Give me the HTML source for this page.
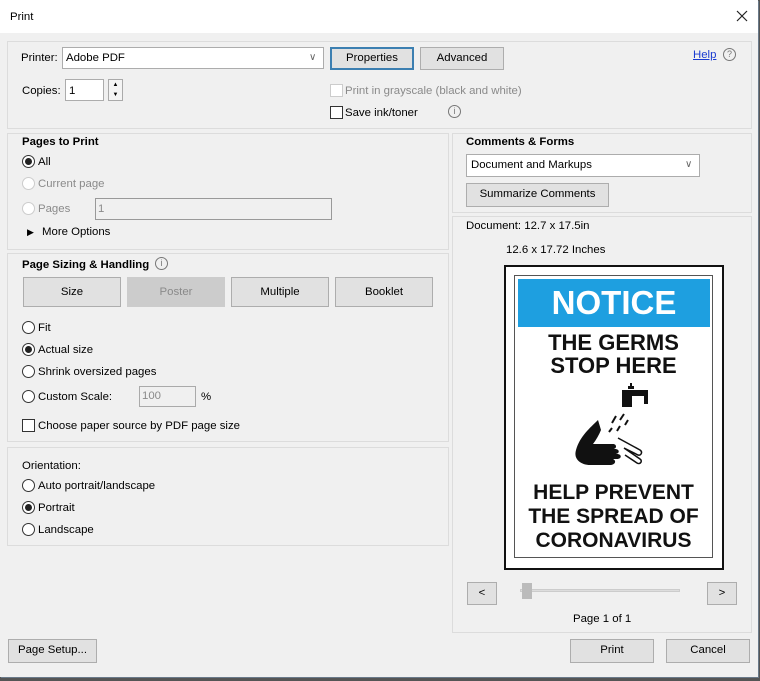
<!DOCTYPE html>
<html><head><style>
*{box-sizing:border-box;margin:0;padding:0}
body{width:760px;height:681px;background:#555;position:relative;overflow:hidden;font-family:"Liberation Sans",sans-serif;font-size:11.4px;color:#000}
.a{position:absolute}
.dlg{left:0;top:0;width:758px;height:677px;background:#f0f0f0;box-shadow:1px 1px 0 #6a7a8a, -1px 0 0 #2a6aa0}
.panel{position:absolute;border:1px solid #dcdcdc;background:#f0f0f0}
.t{position:absolute;white-space:nowrap;line-height:14px}
.btn{position:absolute;background:#e1e1e1;border:1px solid #adadad;text-align:center;line-height:21px}
.in{position:absolute;background:#fff;border:1px solid #7a7a7a}
.rad{position:absolute;width:13px;height:13px;border:1px solid #333;border-radius:50%;background:#fff}
.rad.on::after{content:"";position:absolute;left:2px;top:2px;width:7px;height:7px;border-radius:50%;background:#222}
.rad.dis{border-color:#ccc}
.cb{position:absolute;width:13px;height:13px;border:1px solid #333;background:#fff}
.g{color:#8a8a8a}
.b{font-weight:bold}
.info{position:absolute;width:13px;height:13px;border:1px solid #777;border-radius:50%;font-size:9px;line-height:11px;text-align:center;color:#777}
</style></head><body>
<div class="a dlg">
<div class="a" style="left:0;top:0;width:758px;height:33px;background:#fff"></div>
<div class="t" style="left:10px;top:10px">Print</div>
<svg class="a" style="left:736px;top:10px" width="12" height="12"><path d="M1 1L11 11M11 1L1 11" stroke="#222" stroke-width="1.2"/></svg>

<div class="panel" style="left:7px;top:41px;width:745px;height:88px"></div>
<div class="t" style="left:21px;top:51px">Printer:</div>
<div class="in" style="left:62px;top:47px;width:262px;height:22px;border-color:#acacac"></div>
<div class="t" style="left:66px;top:51px">Adobe PDF</div>
<div class="t" style="left:309px;top:51px;color:#666;font-size:10px">∨</div>
<div class="btn" style="left:330px;top:47px;width:84px;height:23px;border:2px solid #3c7fb1;line-height:19px">Properties</div>
<div class="btn" style="left:420px;top:47px;width:84px;height:23px">Advanced</div>
<div class="t" style="left:693px;top:48px;color:#1a3bd0;text-decoration:underline">Help</div>
<div class="info" style="left:723px;top:48px">?</div>
<div class="t" style="left:22px;top:84px">Copies:</div>
<div class="in" style="left:65px;top:79px;width:39px;height:22px;border-color:#acacac"></div>
<div class="t" style="left:69px;top:84px">1</div>
<div class="a" style="left:108px;top:79px;width:15px;height:22px;border:1px solid #aaa;background:#f4f4f4;font-size:6px;text-align:center;line-height:10px">▲<br>▼</div>
<div class="cb" style="left:330px;top:84px;border-color:#ccc"></div>
<div class="t g" style="left:345px;top:84px">Print in grayscale (black and white)</div>
<div class="cb" style="left:330px;top:106px"></div>
<div class="t" style="left:345px;top:106px">Save ink/toner</div>
<div class="info" style="left:448px;top:105px">i</div>

<div class="panel" style="left:7px;top:133px;width:442px;height:117px"></div>
<div class="t b" style="left:22px;top:135px">Pages to Print</div>
<div class="rad on" style="left:22px;top:155px"></div><div class="t" style="left:38px;top:155px">All</div>
<div class="rad dis" style="left:22px;top:177px"></div><div class="t g" style="left:38px;top:177px">Current page</div>
<div class="rad dis" style="left:22px;top:202px"></div><div class="t g" style="left:38px;top:202px">Pages</div>
<div class="in" style="left:95px;top:198px;width:237px;height:22px;background:#f0f0f0;border-color:#999"></div>
<div class="t g" style="left:98px;top:202px">1</div>
<div class="t" style="left:27px;top:225px;font-size:9px">▶</div><div class="t" style="left:42px;top:225px">More Options</div>

<div class="panel" style="left:7px;top:253px;width:442px;height:189px"></div>
<div class="t b" style="left:22px;top:258px">Page Sizing &amp; Handling</div>
<div class="info" style="left:155px;top:257px">i</div>
<div class="btn" style="left:23px;top:277px;width:98px;height:30px;line-height:28px">Size</div>
<div class="btn g" style="left:127px;top:277px;width:98px;height:30px;line-height:28px;background:#ccc;border-color:#ccc">Poster</div>
<div class="btn" style="left:231px;top:277px;width:98px;height:30px;line-height:28px">Multiple</div>
<div class="btn" style="left:335px;top:277px;width:98px;height:30px;line-height:28px">Booklet</div>
<div class="rad" style="left:22px;top:321px"></div><div class="t" style="left:38px;top:321px">Fit</div>
<div class="rad on" style="left:22px;top:343px"></div><div class="t" style="left:38px;top:343px">Actual size</div>
<div class="rad" style="left:22px;top:365px"></div><div class="t" style="left:38px;top:365px">Shrink oversized pages</div>
<div class="rad" style="left:22px;top:390px"></div><div class="t" style="left:38px;top:390px">Custom Scale:</div>
<div class="in" style="left:139px;top:386px;width:57px;height:21px;background:#f0f0f0;border-color:#aaa"></div>
<div class="t g" style="left:142px;top:389px">100</div>
<div class="t" style="left:201px;top:390px">%</div>
<div class="cb" style="left:22px;top:419px"></div><div class="t" style="left:38px;top:419px">Choose paper source by PDF page size</div>

<div class="panel" style="left:7px;top:447px;width:442px;height:99px"></div>
<div class="t" style="left:22px;top:459px">Orientation:</div>
<div class="rad" style="left:22px;top:479px"></div><div class="t" style="left:38px;top:479px">Auto portrait/landscape</div>
<div class="rad on" style="left:22px;top:501px"></div><div class="t" style="left:38px;top:501px">Portrait</div>
<div class="rad" style="left:22px;top:523px"></div><div class="t" style="left:38px;top:523px">Landscape</div>

<div class="panel" style="left:452px;top:133px;width:300px;height:80px"></div>
<div class="t b" style="left:466px;top:135px">Comments &amp; Forms</div>
<div class="in" style="left:466px;top:154px;width:234px;height:23px;border-color:#acacac"></div>
<div class="t" style="left:471px;top:158px">Document and Markups</div>
<div class="t" style="left:685px;top:158px;color:#666;font-size:10px">∨</div>
<div class="btn" style="left:466px;top:183px;width:143px;height:24px">Summarize Comments</div>

<div class="panel" style="left:452px;top:216px;width:300px;height:417px"></div>
<div class="t" style="left:466px;top:219px">Document: 12.7 x 17.5in</div>
<div class="t" style="left:506px;top:243px">12.6 x 17.72 Inches</div>
<div class="a" style="left:504px;top:265px;width:220px;height:305px;background:#fff;border:2px solid #111"></div>
<div class="a" style="left:514px;top:275px;width:199px;height:283px;border:1px solid #555"></div>
<div class="a" style="left:518px;top:279px;width:192px;height:48px;background:#1e9fe0"></div>
<div class="t" style="left:518px;top:286px;width:192px;text-align:center;color:#fff;font-weight:bold;font-size:33px;line-height:34px">NOTICE</div>
<div class="t" style="left:514px;top:331px;width:199px;text-align:center;font-weight:bold;font-size:22px;line-height:23px;color:#111">THE GERMS<br>STOP HERE</div>
<svg class="a" style="left:570px;top:380px" width="90" height="95" viewBox="0 0 90 95">
<rect x="58" y="6" width="6" height="3" fill="#111"/><rect x="60" y="3" width="2" height="6" fill="#111"/>
<path d="M52 10h26v14h-4v-8H62v8h-10z" fill="#111"/><rect x="52" y="22" width="10" height="5" fill="#111"/>
<path d="M54 34l-4 6M46 36l-4 7M58 40l-3 5M50 46l-3 5M42 48l-3 4" stroke="#111" stroke-width="2"/>
<path d="M28 40c-8 8-18 16-22 30c-3 10 6 15 14 15h20c5 0 7-4 3-6h-18 22c5 0 5-5 0-5h-22 20c5 0 5-5 0-5h-18 16c4 0 4-5 0-5h-20c3-4 6-9 8-14z" fill="#111"/>
<path d="M48 58l22 12c3 2 1 6-2 5l-14-7 16 11c3 2 0 6-3 4l-12-8" fill="none" stroke="#111" stroke-width="1.5"/>
</svg>
<div class="t" style="left:514px;top:481px;width:199px;text-align:center;font-weight:bold;font-size:21px;line-height:24px;color:#111">HELP PREVENT<br>THE SPREAD OF<br>CORONAVIRUS</div>

<div class="btn" style="left:467px;top:582px;width:30px;height:23px">&lt;</div>
<div class="a" style="left:520px;top:589px;width:160px;height:3px;background:#ddd;border:1px solid #ccc"></div>
<div class="a" style="left:522px;top:583px;width:10px;height:16px;background:#bbb"></div>
<div class="btn" style="left:707px;top:582px;width:30px;height:23px">&gt;</div>
<div class="t" style="left:573px;top:612px">Page 1 of 1</div>

<div class="btn" style="left:8px;top:639px;width:89px;height:24px">Page Setup...</div>
<div class="btn" style="left:570px;top:639px;width:84px;height:24px">Print</div>
<div class="btn" style="left:666px;top:639px;width:84px;height:24px">Cancel</div>
</div>
</body></html>
